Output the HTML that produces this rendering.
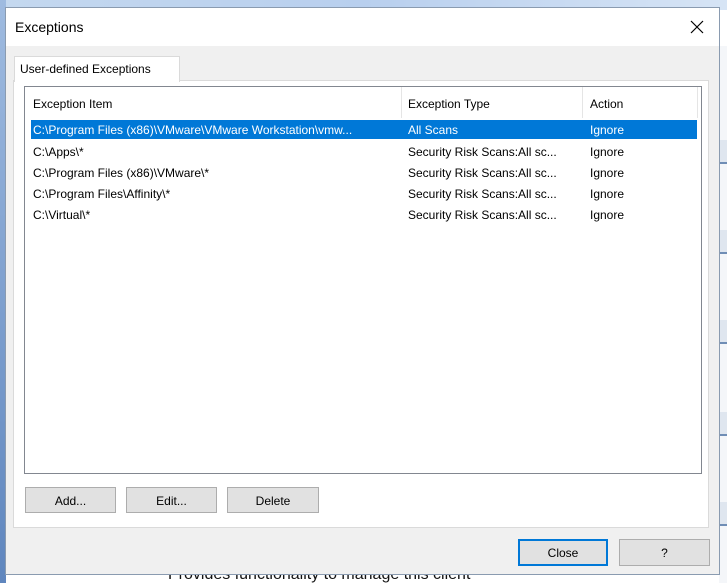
<!DOCTYPE html>
<html><head><style>
*{margin:0;padding:0;box-sizing:border-box}
body{width:727px;height:583px;overflow:hidden;position:relative;background:#fff;font-family:"Liberation Sans",sans-serif;font-size:12px;color:#000}
.a{position:absolute;white-space:nowrap}
.btn{position:absolute;background:#e1e1e1;border:1px solid #adadad;text-align:center;line-height:24px;font-size:12px}
</style></head><body>
<div class="a" style="left:0;top:0;width:727px;height:10px;background:linear-gradient(90deg,#c4d8ef,#b8cfee,#d6e4f5)"></div>
<div class="a" style="left:0;top:0;width:6px;height:583px;background:linear-gradient(180deg,#9fbbe0,#5f86be)"></div>
<div class="a" style="left:719px;top:46px;width:8px;height:537px;background:#f4f6f9"></div>
<div class="a" style="left:720px;top:140px;width:7px;height:24px;background:#dfe6ef;border-bottom:2px solid #6f8db5"></div>
<div class="a" style="left:720px;top:230px;width:7px;height:24px;background:#dfe6ef;border-bottom:2px solid #6f8db5"></div>
<div class="a" style="left:720px;top:320px;width:7px;height:24px;background:#dfe6ef;border-bottom:2px solid #6f8db5"></div>
<div class="a" style="left:720px;top:412px;width:7px;height:24px;background:#dfe6ef;border-bottom:2px solid #6f8db5"></div>
<div class="a" style="left:720px;top:502px;width:7px;height:24px;background:#dfe6ef;border-bottom:2px solid #6f8db5"></div>
<div class="a" style="left:168px;top:566px;font-size:16px;color:#111">Provides functionality to manage this client</div>
<div class="a" style="left:5px;top:7px;width:715px;height:568px;background:#f0f0f0;border:1px solid #8a9bb0"></div>
<div class="a" style="left:6px;top:8px;width:713px;height:38px;background:#fff"></div>
<div class="a" style="left:15px;top:19px;font-size:14px">Exceptions</div>
<svg class="a" style="left:690px;top:20px" width="14" height="14"><path d="M1 1L13 13M13 1L1 13" stroke="#000" stroke-width="1.2"/></svg>
<div class="a" style="left:13px;top:80px;width:696px;height:448px;background:#fff;border:1px solid #dadada"></div>
<div class="a" style="left:14px;top:56px;width:166px;height:26px;background:#fff;border:1px solid #dadada;border-bottom:none"></div>
<div class="a" style="left:20px;top:62px">User-defined Exceptions</div>
<div class="a" style="left:24px;top:86px;width:678px;height:388px;border:1px solid #828790;background:#fff"></div>
<div class="a" style="left:401px;top:87px;width:1px;height:31px;background:#e5e5e5"></div>
<div class="a" style="left:582px;top:87px;width:1px;height:31px;background:#e5e5e5"></div>
<div class="a" style="left:697px;top:87px;width:1px;height:31px;background:#e5e5e5"></div>
<div class="a" style="left:33px;top:97px">Exception Item</div>
<div class="a" style="left:408px;top:97px">Exception Type</div>
<div class="a" style="left:590px;top:97px">Action</div>
<div class="a" style="left:31px;top:120px;width:666px;height:19px;background:#0078d7"></div>
<div class="a" style="left:33px;top:123px;color:#fff">C:\Program Files (x86)\VMware\VMware Workstation\vmw...</div>
<div class="a" style="left:408px;top:123px;color:#fff">All Scans</div>
<div class="a" style="left:590px;top:123px;color:#fff">Ignore</div>
<div class="a" style="left:33px;top:145px">C:\Apps\*</div>
<div class="a" style="left:408px;top:145px">Security Risk Scans:All sc...</div>
<div class="a" style="left:590px;top:145px">Ignore</div>
<div class="a" style="left:33px;top:166px">C:\Program Files (x86)\VMware\*</div>
<div class="a" style="left:408px;top:166px">Security Risk Scans:All sc...</div>
<div class="a" style="left:590px;top:166px">Ignore</div>
<div class="a" style="left:33px;top:187px">C:\Program Files\Affinity\*</div>
<div class="a" style="left:408px;top:187px">Security Risk Scans:All sc...</div>
<div class="a" style="left:590px;top:187px">Ignore</div>
<div class="a" style="left:33px;top:208px">C:\Virtual\*</div>
<div class="a" style="left:408px;top:208px">Security Risk Scans:All sc...</div>
<div class="a" style="left:590px;top:208px">Ignore</div>
<div class="btn" style="left:25px;top:487px;width:91px;height:26px;line-height:26px">Add...</div>
<div class="btn" style="left:126px;top:487px;width:91px;height:26px;line-height:26px">Edit...</div>
<div class="btn" style="left:227px;top:487px;width:92px;height:26px;line-height:26px">Delete</div>
<div class="btn" style="left:518px;top:539px;width:90px;height:27px;border:2px solid #0078d7;line-height:25px">Close</div>
<div class="btn" style="left:619px;top:539px;width:91px;height:27px;line-height:26px">?</div>
</body></html>
